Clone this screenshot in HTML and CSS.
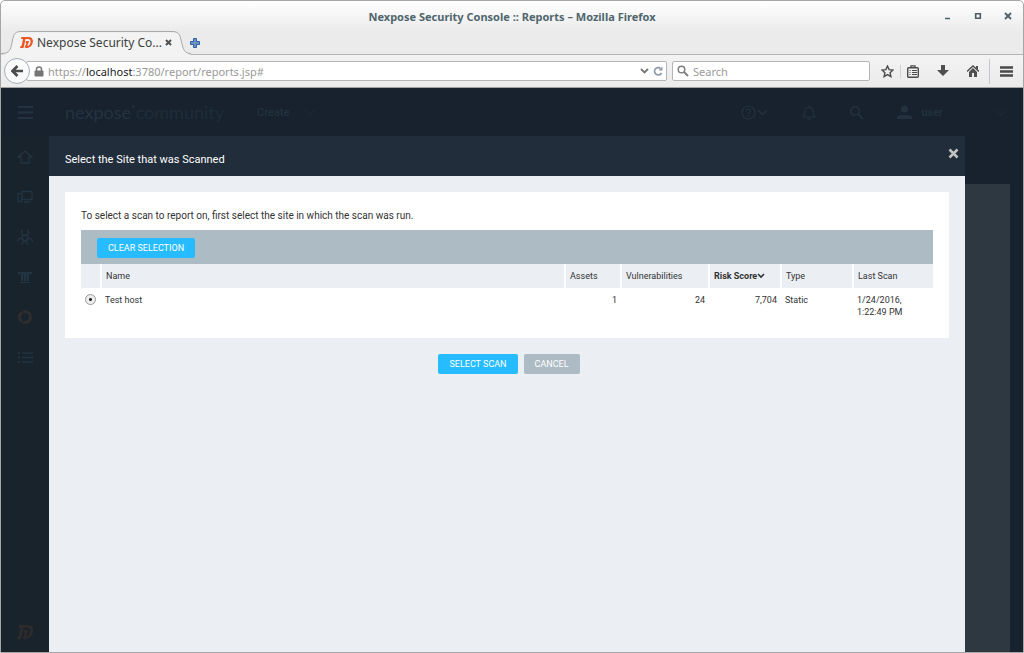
FILE: index.html
```
<!DOCTYPE html>
<html lang="en">
<head>
    <meta charset="UTF-8">
    <meta name="viewport" content="width=device-width, initial-scale=1.0">
    <link rel="stylesheet" href="styles.css">
    <title>Nexpose Security Console :: Reports</title>
</head>
<body>
    <div class="window">
        <div class="titlebar">
            <div class="window-title">Nexpose Security Console :: Reports – Mozilla Firefox</div>
            <div class="window-buttons">
                <button type="button" aria-label="Minimize"><svg width="8" height="8"><path d="M1 6.5h5" stroke="#4b5f66" stroke-width="1.6"/></svg></button>
                <button type="button" aria-label="Maximize"><svg width="8" height="8"><path d="M1.7 1.7h4.6v4.6H1.7z" fill="none" stroke="#4b5f66" stroke-width="1.6"/></svg></button>
                <button type="button" aria-label="Close window"><svg width="8" height="8"><path d="M1 1l6 6M7 1L1 7" stroke="#4b5f66" stroke-width="1.8"/></svg></button>
            </div>
        </div>

        <div class="tabs">
            <div class="tab">
                <svg class="tab-shape" width="190" height="24" viewBox="0 0 190 24">
                    <path d="M0 23.5C7 23.5 9 21 10.500 14L11.500 9C13 3 15 1.500 20 1.500H171C177 1.500 179 4 180 9L181.500 15C183 21 186 23.500 190 23.500V24H0z" fill="#f3f3f3"/>
                    <path d="M0 22.500C7 22.500 9 20.500 10.500 14L11.500 9C13 2 15 .500 20 .500H171C177 .500 179 3 180 9L181.500 15C183 21 186 22.500 190 22.500" fill="none" stroke="#a9a9a9"/>
                </svg>
                <svg class="favicon" width="13" height="11" viewBox="0 0 26 22"><path d="M3 0h14c7 0 10 5 8.500 11S20 22 13 22h-2l1-4h2c4 0 6-3 7-7s-1-7-5-7h-5L8 18l-1 4H0l1-4h2L6 4H2zM12 8h6l-1 4-4 9H9l4-9h-2z" fill="#ea5624"/></svg>
                <span class="tab-title">Nexpose Security Co...</span>
                <button type="button" class="tab-close" aria-label="Close tab"><svg width="7" height="7"><path d="M1 1l5 5M6 1L1 6" stroke="#4d5153" stroke-width="2"/></svg></button>
            </div>
            <button type="button" class="new-tab" aria-label="New tab"><svg width="10" height="10"><path d="M3.500.5h3v3h3v3h-3v3h-3v-3h-3v-3h3z" fill="#6a92c8" stroke="#315f9f"/></svg></button>
        </div>

        <div class="toolbar">
            <button type="button" class="back" aria-label="Back"><svg width="12" height="12" viewBox="0 0 12 12"><path d="M6.500 1L1.500 6l5 5M2 6h10" fill="none" stroke="#4c4c4c" stroke-width="2.700"/></svg></button>
            <div class="url-box">
                <svg width="10" height="11" viewBox="0 0 10 11"><path d="M1 5h8v5H1z" fill="#757575" stroke="#757575"/><path d="M2.500 5V3.200C2.500.3 7.500.3 7.500 3.200V5" fill="none" stroke="#757575" stroke-width="1.500"/></svg>
                <a class="address" href="#">https://<b>localhost</b>:3780/report/reports.jsp#</a>
                <button type="button" aria-label="History"><svg width="9" height="7"><path d="M1 1l3.500 3.500L8 1" fill="none" stroke="#777" stroke-width="1.800"/></svg></button>
                <button type="button" aria-label="Reload"><svg width="10" height="10" viewBox="0 0 10 10"><path d="M7.500 2.300A3.700 3.700 0 1 0 8.500 7" fill="none" stroke="#8d9aa8" stroke-width="1.700"/><path d="M9.500.5v4h-4z" fill="#8d9aa8"/></svg></button>
            </div>
            <label class="search-box">
                <svg width="12" height="12"><circle cx="4.500" cy="4.500" r="3.300" fill="none" stroke="#808080" stroke-width="1.500"/><path d="M7 7l4 4" stroke="#808080" stroke-width="2"/></svg>
                <input type="text" placeholder="Search" aria-label="Search">
            </label>
            <div class="tools">
                <button type="button" aria-label="Bookmark"><svg width="13" height="13" viewBox="0 0 13 13"><path d="M6.500 1l1.600 3.600 3.900.4-2.900 2.700.8 3.900-3.400-2-3.400 2 .8-3.900L1 5l3.900-.4z" fill="none" stroke="#4c4c4c" stroke-width="1.400"/></svg></button>
                <button type="button" class="divided" aria-label="Bookmarks list"><svg width="12" height="13" viewBox="0 0 12 13"><rect x=".7" y="2.700" width="10.600" height="9.600" rx="1" fill="none" stroke="#4c4c4c" stroke-width="1.400"/><path d="M4 2.500V.8h4v1.700" fill="none" stroke="#4c4c4c" stroke-width="1.300"/><path d="M2.500 5.500h1M5 5.500h5M2.500 7.500h1M5 7.500h5M2.500 9.500h1M5 9.500h5" stroke="#4c4c4c"/></svg></button>
                <button type="button" aria-label="Downloads"><svg width="12" height="12"><path d="M4 0h4v5h4l-6 6-6-6h4z" fill="#4f4f4f"/></svg></button>
                <button type="button" aria-label="Home"><svg width="12" height="12"><path d="M0 6.500L6 1l6 5.500" fill="none" stroke="#4f4f4f" stroke-width="1.500"/><path d="M2 7l4-4 4 4v5H7V8H5v4H2zM9 1h2v4L9 3z" fill="#4f4f4f"/></svg></button>
                <button type="button" class="menu" aria-label="Menu"><svg width="13" height="11"><path d="M0 1.500h13M0 5.500h13M0 9.500h13" stroke="#4a4a4a" stroke-width="2.400"/></svg></button>
            </div>
        </div>

        <div class="page">
            <header class="app-header">
                <button type="button" class="hamburger" aria-label="Navigation"><svg width="15" height="15"><path d="M0 2h15M0 7.500h15M0 13h15" stroke="#243341" stroke-width="2"/></svg></button>
                <div class="brand"><b>nexpose</b><sup>•</sup>community</div>
                <button type="button" class="create">Create <svg width="12" height="7"><path d="M1 1l5 5 5-5" fill="none" stroke="#1d2b38"/></svg></button>
                <div class="header-tools">
                    <button type="button" aria-label="Help"><svg width="28" height="15"><circle cx="7.500" cy="7.500" r="6.500" fill="none" stroke="#24323f" stroke-width="1.200"/><path d="M5.500 6c0-3 4-2.500 4-.3C9.500 7 7.500 7 7.500 9M7.500 10v1.500" fill="none" stroke="#24323f" stroke-width="1.300"/><path d="M17 5l4.500 4.500L26 5" fill="none" stroke="#24323f" stroke-width="1.500"/></svg></button>
                    <button type="button" aria-label="Alerts"><svg width="14" height="15"><path d="M1 12c2-2 2-3 2-6 0-5 8-5 8 0 0 3 0 4 2 6zM5.500 13c0 1.500 3 1.500 3 0M7 2V.5" fill="none" stroke="#24323f" stroke-width="1.200"/></svg></button>
                    <button type="button" aria-label="Find"><svg width="15" height="15"><circle cx="6" cy="6" r="4.300" fill="none" stroke="#24323f" stroke-width="1.600"/><path d="M9 9l5 5" stroke="#24323f" stroke-width="2"/></svg></button>
                    <button type="button" class="user"><svg width="15" height="15"><circle cx="7.500" cy="4" r="3.500" fill="#24323f"/><path d="M0 14v-2c2-3 13-3 15 0v2z" fill="#24323f"/></svg>user<svg class="user-arrow" width="12" height="7"><path d="M1 1l5 5 5-5" fill="none" stroke="#1d2b38"/></svg></button>
                </div>
            </header>

            <div class="app-body">
                <nav class="sidebar">
                    <a href="#" aria-label="Home"><svg width="16" height="14"><path d="M1 7l7-6 7 6h-3v6H4V7z" fill="none" stroke="#233442" stroke-width="1.300"/></svg></a>
                    <a href="#" aria-label="Assets"><svg width="16" height="14"><path d="M4 1.500h11v8H5M1 3.500h4v8H1zM7 12h6" fill="none" stroke="#233442" stroke-width="1.300"/></svg></a>
                    <a href="#" aria-label="Vulnerabilities"><svg width="16" height="16"><g fill="none" stroke="#233442" stroke-width="1.300"><path d="M6 1C3 2 4 6.500 8 6.500S13 2 10 1"/><path d="M1 13c-1-4 4-5 5.500-2 1 2-.500 4-2.500 4"/><path d="M15 13c1-4-4-5-5.500-2-1 2 .500 4 2.500 4"/><circle cx="8" cy="9" r="3"/></g></svg></a>
                    <a href="#" aria-label="Policies"><svg width="14" height="13"><path d="M0 1h14v2H0zM3 3h8v7H3zM2 11h10v1H2z" fill="#233442"/><path d="M5.500 3v7M8.500 3v7" stroke="#192630"/></svg></a>
                    <a href="#" aria-label="Reports"><svg width="16" height="16"><circle cx="8" cy="8" r="5.500" fill="none" stroke="#302d2e" stroke-width="3" stroke-dasharray="10.500 1.020"/></svg></a>
                    <a href="#" aria-label="Administration"><svg width="15" height="13"><path d="M4 2h11M4 6.500h11M4 11h11" stroke="#223340" stroke-width="1.500"/><path d="M0 2h2M0 6.500h2M0 11h2" stroke="#223340" stroke-width="2"/></svg></a>
                    <svg class="rapid" width="18" height="14" viewBox="0 0 26 22"><path d="M3 0h14c7 0 10 5 8.500 11S20 22 13 22h-2l1-4h2c4 0 6-3 7-7s-1-7-5-7h-5L8 18l-1 4H0l1-4h2L6 4H2zM12 8h6l-1 4-4 9H9l4-9h-2z" fill="#2e2b2c"/></svg>
                </nav>
                <div class="report-area"></div>
            </div>

            <section class="dialog" role="dialog" aria-labelledby="dialog-title">
                <div class="dialog-header">
                    <h1 id="dialog-title">Select the Site that was Scanned</h1>
                    <button type="button" aria-label="Close"><svg width="11" height="11"><path d="M1.500 1.500l8 8M9.500 1.500l-8 8" stroke="#c3c3c1" stroke-width="2.500"/></svg></button>
                </div>
                <form class="dialog-body" onsubmit="return false">
                    <div class="panel">
                        <p>To select a scan to report on, first select the site in which the scan was run.</p>
                        <div class="table-tools">
                            <button type="button" class="btn btn-primary">CLEAR SELECTION</button>
                        </div>
                        <table>
                            <thead>
                                <tr>
                                    <th class="col-pick"></th>
                                    <th>Name</th>
                                    <th class="col-assets">Assets</th>
                                    <th class="col-vulns">Vulnerabilities</th>
                                    <th class="col-risk sorted">Risk Score<svg width="8" height="6"><path d="M1 1l3 3 3-3" fill="none" stroke="#333" stroke-width="1.600"/></svg></th>
                                    <th class="col-type">Type</th>
                                    <th class="col-date">Last Scan</th>
                                </tr>
                            </thead>
                            <tbody>
                                <tr>
                                    <td class="pick"><input type="radio" name="site" id="test-host" checked></td>
                                    <td><label for="test-host">Test host</label></td>
                                    <td class="num">1</td>
                                    <td class="num">24</td>
                                    <td class="num">7,704</td>
                                    <td>Static</td>
                                    <td>1/24/2016,<br>1:22:49 PM</td>
                                </tr>
                            </tbody>
                        </table>
                    </div>
                    <div class="actions">
                        <button type="submit" class="btn btn-primary">SELECT SCAN</button>
                        <button type="button" class="btn btn-muted">CANCEL</button>
                    </div>
                </form>
            </section>
        </div>
    </div>
</body>
</html>
```
FILE: styles.css
```
* {
    box-sizing: border-box;
}

body {
    margin: 0;
    font-family: Roboto, "Liberation Sans", sans-serif;
    color: #333;
    background-color: #fff;
}

button {
    font-family: inherit;
    border: none;
    background: none;
    padding: 0;
    cursor: pointer;
}

svg {
    display: block;
    flex-shrink: 0;
}

.window {
    display: flex;
    flex-direction: column;
    height: 100vh;
    border: 1px solid #a6a6a6;
    border-radius: 5px 5px 0 0;
    overflow: hidden;
    background: linear-gradient(#fff, #ebebeb 30px);
    font-size: 11px;
}

/* browser chrome */
.titlebar {
    display: grid;
    grid-template-columns: 1fr auto 1fr;
    align-items: center;
    height: 30px;
    font-family: "Noto Sans", "Open Sans", sans-serif;
}

.window-title {
    grid-column: 2;
    font-size: 11px;
    font-weight: bold;
    color: #4f666d;
}

.window-buttons {
    display: flex;
    justify-content: flex-end;
    gap: 22px;
    padding-right: 11px;
}

.tabs {
    display: flex;
    align-items: center;
    height: 24px;
    border-bottom: 1px solid #b4b4b4;
    font-family: "Noto Sans", "Open Sans", sans-serif;
}

.tab {
    position: relative;
    display: flex;
    align-items: center;
    width: 189px;
    height: 24px;
    padding-left: 19px;
}

.tab-shape {
    position: absolute;
    left: 0;
    top: 0;
}

.favicon,
.tab-title,
.tab-close {
    position: relative;
}

.tab-title {
    width: 128px;
    margin-left: 4px;
    font-size: 12px;
    white-space: nowrap;
    color: #3c3f40;
}

.toolbar {
    display: flex;
    align-items: center;
    height: 33px;
    flex-shrink: 0;
    padding: 0 10px 0 3px;
    background: linear-gradient(#f3f3f3, #ebebeb);
    border-bottom: 1px solid #a2a2a2;
    font-family: "Noto Sans", "Open Sans", sans-serif;
}

.back {
    display: flex;
    align-items: center;
    justify-content: center;
    width: 26px;
    height: 26px;
    border: 1px solid #a7afb8;
    border-radius: 50%;
    background-color: #fafafa;
    z-index: 1;
}

.url-box,
.search-box {
    display: flex;
    align-items: center;
    height: 20px;
    border: 1px solid #b5b5b5;
    border-radius: 2px;
    background-color: #fff;
}

.url-box {
    flex: 1;
    gap: 4px;
    margin-left: -4px;
    padding: 0 3px 0 7px;
}

.address {
    flex: 1;
    font-size: 11px;
    color: #999;
    text-decoration: none;
}

.address b {
    font-weight: normal;
    color: #222;
}

.search-box {
    width: 198px;
    margin-left: 5px;
    padding-left: 4px;
    gap: 4px;
}

.search-box input {
    flex: 1;
    min-width: 0;
    padding: 0;
    border: none;
    outline: none;
    font-family: inherit;
    font-size: 11px;
}

.search-box input::placeholder {
    color: #999;
}

.tools {
    display: flex;
    align-items: center;
    padding-left: 11px;
    gap: 18px;
}

.tools .divided {
    margin-left: -12px;
    padding-left: 6px;
    border-left: 1px solid #d2d2d2;
}

.tools .menu {
    display: flex;
    align-items: center;
    height: 25px;
    margin-left: -8px;
    padding-left: 10px;
    border-left: 1px solid #c4c7cd;
}

/* console behind the dialog */
.page {
    position: relative;
    display: flex;
    flex-direction: column;
    flex: 1;
    min-height: 0;
    background-color: #17222e;
}

.app-header {
    display: flex;
    align-items: center;
    height: 48px;
    color: #24323f;
}

.hamburger {
    padding: 0 16px 0 17px;
}

.brand {
    padding: 0 33px 0 16px;
    font-family: Lato, "Open Sans", sans-serif;
    font-size: 18px;
    color: #1f2d39;
}

.brand b {
    font-weight: normal;
    color: #253340;
}

.brand sup {
    font-size: 8px;
    vertical-align: top;
}

.create {
    display: flex;
    align-items: center;
    gap: 14px;
    font-size: 11px;
    font-weight: 500;
    color: #24323f;
}

.header-tools {
    display: flex;
    align-items: center;
    gap: 33px;
    margin-left: auto;
    padding-right: 16px;
}

.user {
    display: flex;
    align-items: center;
    gap: 9px;
    font-size: 11px;
    font-weight: 500;
    color: #24323f;
}

.user-arrow {
    margin-left: 43px;
}

.app-body {
    display: flex;
    flex: 1;
    min-height: 0;
}

.sidebar {
    display: flex;
    flex-direction: column;
    align-items: center;
    width: 48px;
    padding: 1px 0 13px;
    background-color: #19232c;
}

.sidebar a {
    display: flex;
    align-items: center;
    height: 40px;
}

.rapid {
    margin-top: auto;
}

.report-area {
    flex: 1;
    margin: 48px 13px 0 16px;
    background-color: #2d3841;
}

/* site picker */
.dialog {
    position: absolute;
    top: 48px;
    right: 58px;
    bottom: 0;
    left: 48px;
    background-color: #ebeff4;
}

.dialog-header {
    display: flex;
    justify-content: space-between;
    align-items: center;
    height: 40px;
    padding: 0 6px 0 16px;
    background-color: #222d3b;
}

.dialog-header h1 {
    margin: 0;
    padding-top: 6px;
    font-size: 11px;
    font-weight: normal;
    color: #fff;
}

.dialog-header button {
    padding-bottom: 6px;
}

.dialog-body {
    padding: 16px;
}

.panel {
    padding: 16px 16px 14px;
    background-color: #fff;
}

.panel p {
    margin: 0;
    padding-bottom: 6px;
    font-size: 10px;
    line-height: 16px;
}

.table-tools {
    height: 34px;
    padding: 8px 16px;
    background-color: #adbbc4;
}

.btn {
    height: 20px;
    padding: 0 11px;
    border-radius: 2px;
    font-size: 9px;
    color: #fff;
    vertical-align: top;
}

.btn-primary {
    background-color: #26bcff;
}

.btn-muted {
    background-color: #adbbc4;
}

table {
    width: 100%;
    table-layout: fixed;
    border-collapse: collapse;
    font-size: 9px;
    line-height: 12px;
}

th,
td {
    padding: 6px 4px;
    text-align: left;
    font-weight: normal;
    vertical-align: top;
}

th {
    background-color: #ebeff4;
    border-right: 2px solid #fff;
    white-space: nowrap;
}

th:last-child {
    border-right: none;
}

td.num {
    text-align: right;
}

td.pick {
    padding: 6px 0 0 4px;
}

.col-pick {
    width: 20px;
}

.col-assets {
    width: 56px;
}

.col-vulns {
    width: 88px;
}

.col-risk,
.col-type {
    width: 72px;
}

.col-date {
    width: 80px;
}

.sorted {
    font-weight: bold;
}

.sorted svg {
    display: inline-block;
}

.pick input {
    appearance: none;
    display: block;
    width: 11px;
    height: 11px;
    margin: 0;
    border: 1px solid #999;
    border-radius: 50%;
    background: radial-gradient(circle, #222 0 1px, #eee 2px);
}

.actions {
    display: flex;
    justify-content: center;
    gap: 6px;
    padding: 16px 0 0 4px;
}
```
